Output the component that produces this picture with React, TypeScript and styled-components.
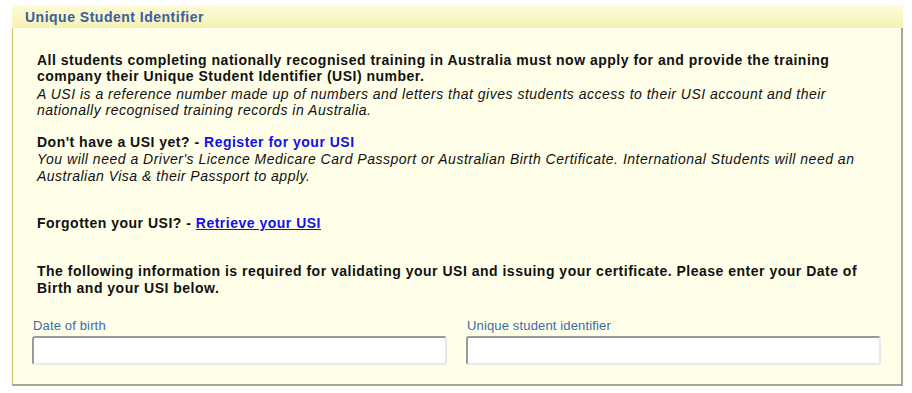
import React from "react";
import styled, { createGlobalStyle } from "styled-components";

const GlobalStyle = createGlobalStyle`
  body {
    margin: 0;
    background: #ffffff;
    font-family: "Liberation Sans", Arial, sans-serif;
  }
`;

const Page = styled.div`
  padding: 5px 0 0 12px;
`;

const Panel = styled.section`
  width: 891px;
`;

const PanelHeader = styled.h2`
  margin: 0;
  height: 23px;
  line-height: 24px;
  padding-left: 13px;
  font-size: 14px;
  font-weight: bold;
  letter-spacing: 0.5px;
  color: #3a5e9e;
  background: linear-gradient(to bottom, #fdfbd6 0%, #f6f1b4 100%);
`;

const PanelBody = styled.div`
  background: #fffee8;
  border-left: 1px solid #c9c46c;
  border-right: 2px solid #a7a693;
  border-bottom: 2px solid #a7a693;
  padding: 24px 20px 19px 19px;
  color: #111;
  font-size: 14px;
  letter-spacing: 0.5px;
`;

const Block = styled.div<{ $gap?: number }>`
  padding-left: 5px;
  padding-right: 5px;
  margin-top: ${(p) => p.$gap ?? 0}px;
`;

const Lead = styled.div<{ $lh?: number }>`
  font-weight: bold;
  line-height: ${(p) => p.$lh ?? 17}px;
`;

const Note = styled.div<{ $lh?: number; $gap?: number }>`
  font-style: italic;
  line-height: ${(p) => p.$lh ?? 17}px;
  margin-top: ${(p) => p.$gap ?? 0}px;
`;

const Link = styled.a<{ $underline?: boolean }>`
  color: #1212e6;
  text-decoration: ${(p) => (p.$underline ? "underline" : "none")};
  cursor: pointer;
`;

const FormRow = styled.div`
  display: grid;
  grid-template-columns: 1fr 1fr;
  gap: 19px;
  margin-top: 21px;
`;

const Field = styled.label`
  display: flex;
  flex-direction: column;
`;

const FieldLabel = styled.span`
  font-size: 13px;
  line-height: 15px;
  letter-spacing: 0.15px;
  color: #3b6ca6;
  padding-left: 1px;
`;

const Input = styled.input`
  box-sizing: border-box;
  margin-top: 3px;
  height: 29px;
  width: 100%;
  background: #fff;
  border-style: solid;
  border-width: 2px;
  border-color: #9a9a9a #e6e6e6 #e8e8e8 #9a9a9a;
  border-radius: 3px;
  font-family: inherit;
  font-size: 14px;
  padding: 0 6px;
  outline: none;
`;

export default function App() {
  return (
    <>
      <GlobalStyle />
      <Page>
        <Panel>
          <PanelHeader>Unique Student Identifier</PanelHeader>
          <PanelBody>
            <Block>
              <Lead $lh={16}>
                All students completing nationally recognised training in Australia must now apply for and provide the
                training company their Unique Student Identifier (USI) number.
              </Lead>
              <Note $lh={16} $gap={2}>
                A USI is a reference number made up of numbers and letters that gives students access to their USI
                account and their nationally recognised training records in Australia.
              </Note>
            </Block>

            <Block $gap={16}>
              <Lead>
                Don't have a USI yet? - <Link>Register for your USI</Link>
              </Lead>
              <Note>
                You will need a Driver's Licence Medicare Card Passport or Australian Birth Certificate. International
                Students will need an Australian Visa &amp; their Passport to apply.
              </Note>
            </Block>

            <Block $gap={30}>
              <Lead>
                Forgotten your USI? - <Link $underline>Retrieve your USI</Link>
              </Lead>
            </Block>

            <Block $gap={31}>
              <Lead>
                The following information is required for validating your USI and issuing your certificate. Please
                enter your Date of Birth and your USI below.
              </Lead>
            </Block>

            <FormRow>
              <Field>
                <FieldLabel>Date of birth</FieldLabel>
                <Input type="text" />
              </Field>
              <Field>
                <FieldLabel>Unique student identifier</FieldLabel>
                <Input type="text" />
              </Field>
            </FormRow>
          </PanelBody>
        </Panel>
      </Page>
    </>
  );
}
